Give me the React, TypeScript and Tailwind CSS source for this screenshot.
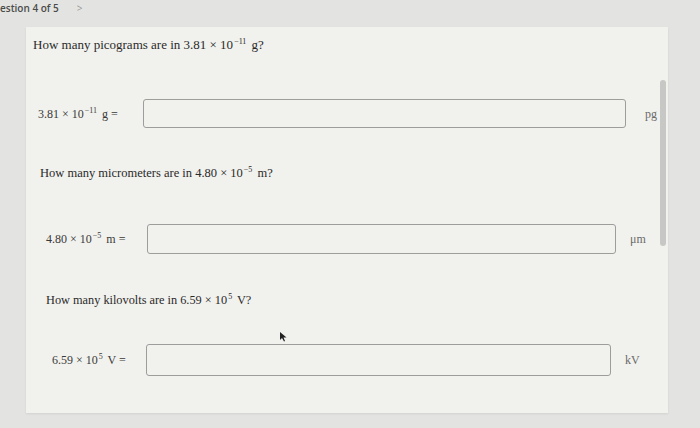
const serif = { fontFamily: '"Liberation Serif", "Times New Roman", serif' };

const Sup = ({ children }: { children: React.ReactNode }) => (
  <sup className="relative -top-[5px] ml-[1px] mr-[2px] align-baseline text-[8px]">{children}</sup>
);

type RowProps = {
  label: React.ReactNode;
  labelLeft: string;
  labelWidth: string;
  inputWidth: string;
  inputHeight: string;
  unitGap: string;
  unit: string;
};

const AnswerRow: React.FC<RowProps> = ({ label, labelLeft, labelWidth, inputWidth, inputHeight, unitGap, unit }) => (
  <div className={`flex items-center ${labelLeft}`}>
    <div className={`${labelWidth} shrink-0 text-[12px] text-[#3a3a38]`}>{label}</div>
    <div className={`${inputWidth} ${inputHeight} shrink-0 rounded-[3px] border border-[#9d9e9b] bg-[#f1f1ee]`} />
    <div className={`${unitGap} text-[12px] text-[#6a6a68]`}>{unit}</div>
  </div>
);

export default function App() {
  return (
    <div className="relative h-[428px] w-[700px] overflow-hidden bg-[#e3e4e1]" style={serif}>
      <div className="flex h-[27px] items-start pt-[1px] text-[10px]" style={{ fontFamily: '"Open Sans", sans-serif' }}>
        <span className="font-semibold text-[#4b4b4a]">estion 4 of 5</span>
        <span className="ml-[18px] text-[#9a9a98]">&gt;</span>
      </div>

      <div className="relative ml-[26px] mr-[32px] h-[386px] bg-[#f1f1ee] shadow-[0_1px_2px_rgba(0,0,0,0.08)]">
        <div className="flex flex-col pt-[9px]">
          <p className="ml-[7px] h-[18px] text-[13px] leading-[18px] text-[#2a2a29]">
            How many picograms are in 3.81 × 10<Sup>−11</Sup> g?
          </p>
          <div className="mt-[45px]">
            <AnswerRow
              label={<>3.81 × 10<Sup>−11</Sup> g =</>}
              labelLeft="ml-[12px]"
              labelWidth="w-[105px]"
              inputWidth="w-[483px]"
              inputHeight="h-[29px]"
              unitGap="ml-[19px]"
              unit="pg"
            />
          </div>
          <p className="ml-[14px] mt-[36px] h-[18px] text-[12.5px] leading-[18px] text-[#2a2a29]">
            How many micrometers are in 4.80 × 10<Sup>−5</Sup> m?
          </p>
          <div className="mt-[42px]">
            <AnswerRow
              label={<>4.80 × 10<Sup>−5</Sup> m =</>}
              labelLeft="ml-[20px]"
              labelWidth="w-[101px]"
              inputWidth="w-[469px]"
              inputHeight="h-[30px]"
              unitGap="ml-[14px]"
              unit="μm"
            />
          </div>
          <p className="ml-[20px] mt-[37px] h-[18px] text-[12.3px] leading-[18px] text-[#2a2a29]">
            How many kilovolts are in 6.59 × 10<Sup>5</Sup> V?
          </p>
          <div className="mt-[35px]">
            <AnswerRow
              label={<>6.59 × 10<Sup>5</Sup> V =</>}
              labelLeft="ml-[26px]"
              labelWidth="w-[94px]"
              inputWidth="w-[465px]"
              inputHeight="h-[32px]"
              unitGap="ml-[14px]"
              unit="kV"
            />
          </div>
        </div>

        {/* scrollbar thumb */}
        <div className="absolute right-[2px] top-[53px] h-[166px] w-[6px] rounded-full bg-[#c7c8c5]" />

        {/* mouse cursor */}
        <svg className="absolute left-[253px] top-[305px]" width="8" height="10" viewBox="0 0 8 10">
          <path d="M1 0 L1 8 L3 6 L5 9.5 L6 9 L4.5 5.5 L7.5 5.5 Z" fill="#222" />
        </svg>
      </div>
    </div>
  );
}
